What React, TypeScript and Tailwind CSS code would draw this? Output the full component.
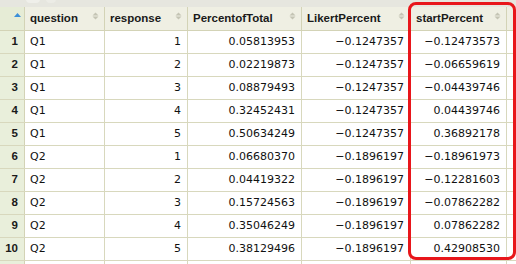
const rows = [
  ['1', 'Q1', '1', '0.05813953', '−0.1247357', '−0.12473573'],
  ['2', 'Q1', '2', '0.02219873', '−0.1247357', '−0.06659619'],
  ['3', 'Q1', '3', '0.08879493', '−0.1247357', '−0.04439746'],
  ['4', 'Q1', '4', '0.32452431', '−0.1247357', '0.04439746'],
  ['5', 'Q1', '5', '0.50634249', '−0.1247357', '0.36892178'],
  ['6', 'Q2', '1', '0.06680370', '−0.1896197', '−0.18961973'],
  ['7', 'Q2', '2', '0.04419322', '−0.1896197', '−0.12281603'],
  ['8', 'Q2', '3', '0.15724563', '−0.1896197', '−0.07862282'],
  ['9', 'Q2', '4', '0.35046249', '−0.1896197', '0.07862282'],
  ['10', 'Q2', '5', '0.38129496', '−0.1896197', '0.42908530'],
]

const headers = ['question', 'response', 'PercentofTotal', 'LikertPercent', 'startPercent']

const grid = 'grid grid-cols-[25px_80px_83px_114px_109px_96px_1fr]'
const bold = "font-['Liberation_Sans',Arial,sans-serif] font-bold text-[11.5px]"
const body = "font-['DejaVu_Sans',sans-serif] text-[11px] text-[#111]"

function SortIcon() {
  return (
    <svg width="7" height="8" viewBox="0 0 7 8" className="absolute right-[5px] top-[5px]">
      <path d="M3.5 0.5 L6.5 3.5 L0.5 3.5 Z" fill="#c4c4b4" />
      <path d="M3.5 7.5 L6.5 4.5 L0.5 4.5 Z" fill="#c4c4b4" />
    </svg>
  )
}

export default function App() {
  return (
    <div className="relative w-[516px] h-[264px] overflow-hidden bg-white">
      {/* toolbar remnant */}
      <div className="h-[7px] bg-[#e6e6df] flex gap-[6px] px-[26px]">
        <div className="w-[14px] h-[4px] mt-[-1px] rounded-b bg-[#efefea]" />
        <div className="w-[10px] h-[4px] mt-[-1px] rounded-b bg-[#ececE6]" />
      </div>

      {/* header */}
      <div className={`${grid} h-[24px] bg-[#efefe3] border-b border-[#d3d3b6]`}>
        <div className="relative border-r border-[#d3d3b6] bg-[#e6ecd6]">
          <svg width="7" height="4" viewBox="0 0 7 4" className="absolute left-[14px] top-[6px]">
            <path d="M3.5 0 L7 4 L0 4 Z" fill="#3b8fd9" />
          </svg>
        </div>
        {headers.map((h) => (
          <div
            key={h}
            className={`relative flex items-center pl-[5px] border-r border-[#d3d3b6] ${bold} text-[#1a1a1a]`}
          >
            {h}
            <SortIcon />
          </div>
        ))}
        <div />
      </div>

      {/* body */}
      {rows.map((r) => (
        <div key={r[0]} className={`${grid} h-[23px] border-b border-[#d8d8bd]`}>
          <div className={`flex items-center justify-end pr-[6px] bg-[#e9efdb] border-r border-[#d3d3b6] ${bold} text-[#1a1a1a]`}>
            {r[0]}
          </div>
          <div className={`flex items-center pl-[5px] border-r border-[#d8d8bd] ${body}`}>{r[1]}</div>
          {r.slice(2).map((v, i) => (
            <div key={i} className={`flex items-center justify-end pr-[6px] border-r border-[#d8d8bd] ${body}`}>
              {v}
            </div>
          ))}
          <div />
        </div>
      ))}
      <div className={`${grid} h-[10px]`}>
        <div className="bg-[#e9efdb] border-r border-[#d3d3b6]" />
        <div className="border-r border-[#d8d8bd]" />
        <div className="border-r border-[#d8d8bd]" />
        <div className="border-r border-[#d8d8bd]" />
        <div className="border-r border-[#d8d8bd]" />
        <div className="border-r border-[#d8d8bd]" />
        <div />
      </div>

      {/* highlight */}
      <div className="absolute left-[408px] top-[2px] w-[108px] h-[258px] border-[3.5px] border-[#e8161b] rounded-[8px]" />
    </div>
  )
}
